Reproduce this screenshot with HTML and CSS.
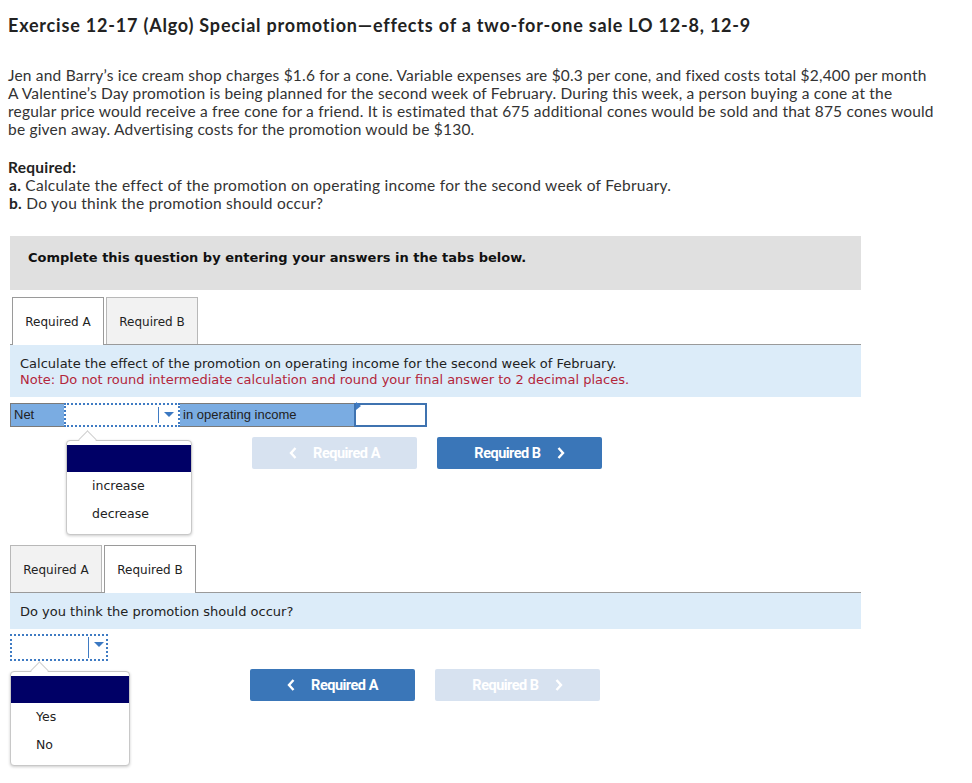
FILE: index.html
```html
<!DOCTYPE html>
<html lang="en">
<head>
    <meta charset="UTF-8">
    <title>Exercise 12-17 (Algo)</title>
    <link rel="stylesheet" href="styles.css">
</head>
<body>

<h1 class="title">Exercise 12-17 (Algo) Special promotion—effects of a two-for-one sale LO 12-8, 12-9</h1>

<div class="problem">
    <p class="line">Jen and Barry’s ice cream shop charges $1.6 for a cone. Variable expenses are $0.3 per cone, and fixed costs total $2,400 per month</p>
    <p class="line">A Valentine’s Day promotion is being planned for the second week of February. During this week, a person buying a cone at the</p>
    <p class="line">regular price would receive a free cone for a friend. It is estimated that 675 additional cones would be sold and that 875 cones would</p>
    <p class="line">be given away. Advertising costs for the promotion would be $130.</p>
</div>

<div class="required">
    <p class="req-head">Required:</p>
    <p class="req-item"><b>a.</b> Calculate the effect of the promotion on operating income for the second week of February.</p>
    <p class="req-item"><b>b.</b> Do you think the promotion should occur?</p>
</div>

<div class="instructions">Complete this question by entering your answers in the tabs below.</div>

<!-- Required A -->
<div class="section section-a">
    <div class="tabs">
        <div class="tab active">Required A</div>
        <div class="tab">Required B</div>
    </div>
    <div class="prompt">
        Calculate the effect of the promotion on operating income for the second week of February.<br>
        <span class="note">Note: Do not round intermediate calculation and round your final answer to 2 decimal places.</span>
    </div>

    <div class="answer-row">
        <div class="cell label-net">Net</div>
        <div class="dropdown wide">
            <span class="dd-arrow"></span>
            <div class="menu menu-a">
                <div class="menu-selected"></div>
                <div class="menu-item">increase</div>
                <div class="menu-item">decrease</div>
            </div>
        </div>
        <div class="cell label-income">in operating income</div>
        <div class="amount"><span class="corner"></span></div>
    </div>

    <div class="nav nav-a">
        <button class="nav-btn disabled">
            <svg class="chev" width="8" height="12" viewBox="0 0 8 12"><polyline points="6.5,1 2,6 6.5,11" fill="none" stroke="currentColor" stroke-width="2.4"/></svg>
            Required A
        </button>
        <button class="nav-btn">
            Required B
            <svg class="chev right" width="8" height="12" viewBox="0 0 8 12"><polyline points="1.5,1 6,6 1.5,11" fill="none" stroke="currentColor" stroke-width="2.4"/></svg>
        </button>
    </div>
</div>

<!-- Required B -->
<div class="section section-b">
    <div class="tabs">
        <div class="tab">Required A</div>
        <div class="tab active">Required B</div>
    </div>
    <div class="prompt short">Do you think the promotion should occur?</div>

    <div class="dropdown narrow">
        <span class="dd-arrow"></span>
        <div class="menu menu-b">
            <div class="menu-selected"></div>
            <div class="menu-item">Yes</div>
            <div class="menu-item">No</div>
        </div>
    </div>

    <div class="nav nav-b">
        <button class="nav-btn">
            <svg class="chev" width="8" height="12" viewBox="0 0 8 12"><polyline points="6.5,1 2,6 6.5,11" fill="none" stroke="currentColor" stroke-width="2.4"/></svg>
            Required A
        </button>
        <button class="nav-btn disabled">
            Required B
            <svg class="chev right" width="8" height="12" viewBox="0 0 8 12"><polyline points="1.5,1 6,6 1.5,11" fill="none" stroke="currentColor" stroke-width="2.4"/></svg>
        </button>
    </div>
</div>

</body>
</html>
```

FILE: styles.css
```css
body {
    margin: 0;
    padding: 0;
    min-height: 783px;
    background-color: #fff;
    color: #333;
    font-family: 'Lato', 'Liberation Sans', sans-serif;
    width: 972px;
}
p {
    margin: 0;
}
.title {
    margin: 0;
    padding: 14px 0 0 8px;
    font-size: 18px;
    line-height: 22px;
    font-weight: 700;
    letter-spacing: 0.8px;
    color: #222;
    white-space: nowrap;
}
.problem {
    margin-top: 30px;
    padding-left: 8px;
    font-size: 15.5px;
    line-height: 18px;
    letter-spacing: 0.2px;
    color: #333;
}
.problem .line {
    white-space: nowrap;
}
.required {
    margin-top: 20px;
    padding-left: 8px;
    font-size: 15.5px;
    line-height: 18px;
    letter-spacing: 0.26px;
    color: #333;
}
.req-head {
    font-weight: 700;
    color: #222;
}
.req-item {
    padding-left: 1px;
}
.req-item b {
    color: #222;
}
.instructions {
    margin: 24px 0 0 10px;
    width: 851px;
    height: 54px;
    box-sizing: border-box;
    padding: 14px 0 0 18px;
    background-color: #e0e0e0;
    font-family: 'DejaVu Sans', Verdana, sans-serif;
    font-size: 13px;
    line-height: 16px;
    font-weight: 700;
    color: #111;
}

/* tabs + panels */
.section {
    margin-left: 10px;
    width: 851px;
    font-family: 'DejaVu Sans', Verdana, sans-serif;
}
.section-a {
    margin-top: 7px;
}
.section-b {
    margin-top: 76px;
}
.tabs {
    display: flex;
    gap: 2px;
    border-bottom: 1px solid #9a9a9a;
}
.section-a .tabs {
    padding-left: 2px;
}
.tab {
    width: 92px;
    height: 47px;
    box-sizing: border-box;
    border: 1px solid #b8b8b8;
    border-bottom: none;
    background-color: #f2f2f2;
    font-size: 12px;
    line-height: 48px;
    text-align: center;
    color: #222;
    margin-bottom: -1px;
}
.tab.active {
    background-color: #fff;
    border-color: #9a9a9a;
    height: 48px;
}
.prompt {
    background-color: #dcecf9;
    padding: 11px 10px 9px 10px;
    font-size: 13px;
    line-height: 16px;
    color: #222;
}
.prompt.short {
    padding: 11px 10px 9px 10px;
}
.note {
    color: #b3263b;
}

/* answer row */
.answer-row {
    display: flex;
    width: 417px;
    height: 24px;
    margin-top: 6px;
    box-sizing: border-box;
    border: 1px solid #7a7a7a;
    font-family: 'Liberation Sans', Arial, sans-serif;
    font-size: 13px;
    color: #222;
}
.cell {
    background-color: #7aace2;
    line-height: 22px;
}
.label-net {
    width: 53px;
    padding-left: 3px;
    box-sizing: border-box;
}
.label-income {
    width: 174px;
    padding-left: 3px;
    box-sizing: border-box;
}
.dropdown {
    position: relative;
    background-color: #fff;
    border: 2px dotted #3f7bc3;
    box-sizing: border-box;
}
.dropdown.wide {
    width: 116px;
    height: 24px;
    margin-top: -1px;
}
.dropdown.narrow {
    width: 98px;
    height: 27px;
    margin-top: 5px;
}
.dd-arrow {
    position: absolute;
    right: 0;
    top: 2px;
    bottom: 2px;
    width: 19px;
    border-left: 1px solid #3f7bc3;
}
.dd-arrow::after {
    content: "";
    position: absolute;
    left: 5px;
    top: 5px;
    border-left: 5px solid transparent;
    border-right: 5px solid transparent;
    border-top: 5px solid #3a78c2;
}
.dropdown.narrow .dd-arrow {
    top: 1px;
    bottom: 1px;
    width: 17px;
}
.amount {
    position: relative;
    flex: 1;
    background-color: #fff;
    border: 2px solid #3f73b0;
    margin: -1px -1px -1px 0;
}
.corner {
    position: absolute;
    left: 0;
    top: 0;
    border-top: 4px solid transparent;
    border-bottom: 4px solid transparent;
    border-left: 5px solid #3f7bc3;
    margin-top: -3px;
}

/* dropdown menus */
.menu {
    position: absolute;
    background-color: #fff;
    border: 1px solid #c8c8c8;
    border-radius: 4px;
    box-shadow: 0 1px 3px rgba(0, 0, 0, 0.2);
    padding-top: 4px;
    padding-bottom: 6px;
    font-family: 'DejaVu Sans', Tahoma, sans-serif;
    font-size: 12.5px;
    color: #222;
    z-index: 2;
}
.menu::before {
    content: "";
    position: absolute;
    top: -8px;
    width: 12px;
    height: 12px;
    background-color: #fff;
    border-left: 1px solid #d0d0d0;
    border-top: 1px solid #d0d0d0;
    transform: rotate(45deg);
}
.menu-a {
    left: 0;
    top: 35px;
    width: 124px;
}
.menu-a::before {
    left: 14px;
}
.menu-b {
    left: -2px;
    top: 35px;
    width: 118px;
}
.menu-b::before {
    left: 22px;
}
.menu-selected {
    position: relative;
    height: 27px;
    background-color: #000066;
}
.menu-item {
    height: 28px;
    line-height: 28px;
    padding-left: 25px;
}

/* nav buttons */
.nav {
    display: flex;
    gap: 20px;
}
.nav-a {
    margin: 10px 0 0 242px;
}
.nav-b {
    margin: 8px 0 0 240px;
}
.nav-btn {
    width: 165px;
    height: 32px;
    border: none;
    border-radius: 2px;
    background-color: #3a76b8;
    color: #fff;
    font-family: 'Roboto', 'Liberation Sans', sans-serif;
    font-size: 14.5px;
    font-weight: 700;
    letter-spacing: -0.5px;
    display: flex;
    align-items: center;
    justify-content: center;
    padding: 0;
}
.nav-btn.disabled {
    background-color: #d7e2f0;
}
.chev {
    margin-right: 16px;
}
.chev.right {
    margin: 0 0 0 16px;
}
```
